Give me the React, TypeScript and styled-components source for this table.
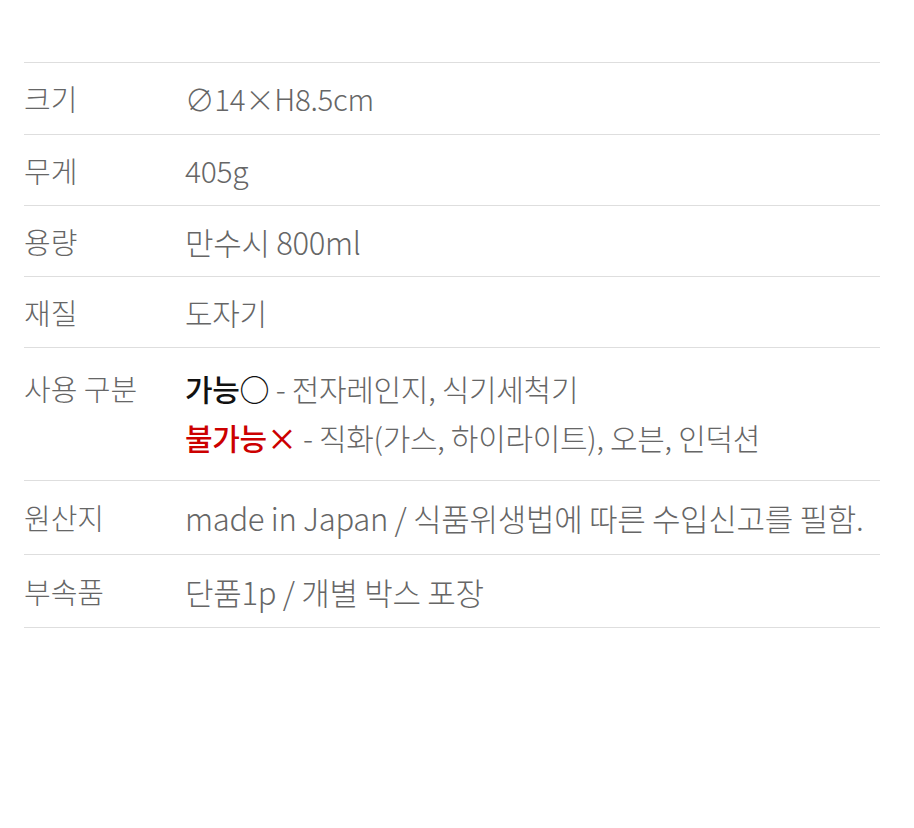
import React from "react";
import styled, { createGlobalStyle } from "styled-components";

const GlobalStyle = createGlobalStyle`
  html, body {
    margin: 0;
    padding: 0;
    background: #fff;
  }
  body {
    font-family: "Noto Sans CJK KR", "Noto Sans", sans-serif;
  }
`;

const Page = styled.div`
  width: 914px;
  height: 828px;
  padding: 62px 34px 0 24px;
  box-sizing: border-box;
`;

const Table = styled.div`
  border-top: 1px solid #dedede;
`;

const Row = styled.div<{ $h: number; $tall?: boolean }>`
  display: grid;
  grid-template-columns: 161px 1fr;
  align-items: ${(p) => (p.$tall ? "start" : "center")};
  height: ${(p) => p.$h}px;
  padding-top: ${(p) => (p.$tall ? "16px" : "0")};
  box-sizing: border-box;
  border-bottom: 1px solid #dedede;
`;

const Label = styled.div`
  font-size: 29px;
  font-weight: 300;
  line-height: 49px;
  color: #666;
  white-space: nowrap;
`;

const Value = styled.div<{ $size: number }>`
  font-size: ${(p) => p.$size}px;
  font-weight: 300;
  line-height: 49px;
  color: #666;
  letter-spacing: -0.3px;
  white-space: nowrap;
`;

const Strong = styled.span<{ $red?: boolean }>`
  font-weight: 500;
  color: ${(p) => (p.$red ? "#cc0000" : "#111")};
`;

const rows = [
  { label: "크기", value: "∅14×H8.5cm", h: 72, size: 29.5 },
  { label: "무게", value: "405g", h: 71, size: 30 },
  { label: "용량", value: "만수시 800ml", h: 71, size: 31 },
  { label: "재질", value: "도자기", h: 71, size: 30 },
];

const rest = [
  { label: "원산지", value: "made in Japan / 식품위생법에 따른 수입신고를 필함.", h: 74, size: 31 },
  { label: "부속품", value: "단품1p / 개별 박스 포장", h: 73, size: 31 },
];

export default function App() {
  return (
    <>
      <GlobalStyle />
      <Page>
        <Table>
          {rows.map((r) => (
            <Row key={r.label} $h={r.h}>
              <Label>{r.label}</Label>
              <Value $size={r.size}>{r.value}</Value>
            </Row>
          ))}
          <Row $h={133} $tall>
            <Label>사용 구분</Label>
            <Value $size={30}>
              <div>
                <Strong>가능○</Strong> - 전자레인지, 식기세척기
              </div>
              <div>
                <Strong $red>불가능×</Strong> - 직화(가스, 하이라이트), 오븐, 인덕션
              </div>
            </Value>
          </Row>
          {rest.map((r) => (
            <Row key={r.label} $h={r.h}>
              <Label>{r.label}</Label>
              <Value $size={r.size}>{r.value}</Value>
            </Row>
          ))}
        </Table>
      </Page>
    </>
  );
}
